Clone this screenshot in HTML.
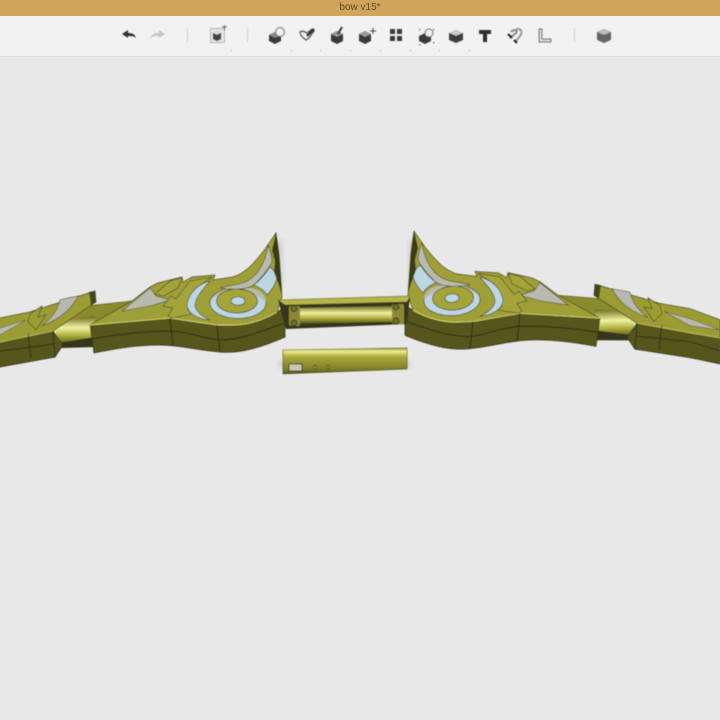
<!DOCTYPE html>
<html><head><meta charset="utf-8"><style>
html,body{margin:0;padding:0;width:720px;height:720px;overflow:hidden;background:#e8e8e8}
.t{position:absolute;left:0;top:0;width:720px;height:16px;background:#cfa55c;text-align:center;font:10px/15px "Liberation Sans",sans-serif;color:#5a4a2c}
.b{position:absolute;left:0;top:16px;width:720px;height:40px;background:#f2f2f2;border-bottom:1px solid #dedede}
svg{position:absolute;left:0;top:0}
</style></head><body>
<svg width="720" height="720" viewBox="0 0 720 720" style="top:0">
<defs>
<linearGradient id="tube" x1="0" y1="0" x2="0" y2="1"><stop offset="0" stop-color="#6a6a20"/><stop offset=".4" stop-color="#f2f2a0"/><stop offset=".7" stop-color="#a8a838"/><stop offset="1" stop-color="#4a4a18"/></linearGradient>
<linearGradient id="tube2" x1="0" y1="0" x2="0" y2="1"><stop offset="0" stop-color="#8a8a30"/><stop offset=".12" stop-color="#eeee90"/><stop offset=".35" stop-color="#a8a83a"/><stop offset=".8" stop-color="#7f7f2a"/><stop offset="1" stop-color="#52521c"/></linearGradient>
<filter id="bl" x="-5%" y="-5%" width="110%" height="110%"><feGaussianBlur stdDeviation="0.5"/></filter>
<filter id="sh" x="-30%" y="-30%" width="160%" height="160%"><feGaussianBlur stdDeviation="3"/></filter>
<g id="limb">
<!-- outer connector -->
<path d="M67 308L132 301L132 318L90 322L60 324Z" fill="#8a8a2e" stroke="#4a4a1a" stroke-width=".6"/>
<path d="M56 329L62 320L95 316L95 338L60 345L56 340Z" fill="url(#tube)"/>
<path d="M58 343L95 337L95 347L62 348Z" fill="#34341a"/>
<!-- outer section -->
<path d="M-30 332L0 342L53 331L63 345L55 357L0 367L-30 374Z" fill="#55551f" stroke="#2e2e14" stroke-width=".7"/>
<path d="M-30 330L0 318L30 312L95 291L96 302L53 331L0 342L-30 348Z" fill="#9c9c36" stroke="#3c3c18" stroke-width=".7"/>
<path d="M-30 348L0 342L53 331" fill="none" stroke="#d0d068" stroke-width=".8"/>
<path d="M60 300C70 297 74 297 78 296C72 308 62 318 42 326C52 318 58 310 60 300Z" fill="#b8b8ae" stroke="#4a4a20" stroke-width=".6"/>
<path d="M-30 340L0 328L26 320L0 335Z" fill="#b8b8ae" stroke="#4a4a20" stroke-width=".5"/>
<path d="M30 314L42 306L38 317L46 315L36 330L28 322Z" fill="#9c9c36" stroke="#3c3c18" stroke-width=".6"/>
<path d="M28 333L31 358M-30 361L0 351L54 344M53 331L55 357" fill="none" stroke="#24240e" stroke-width=".7"/>
<path d="M89 292L95 291L96 302L91 305Z" fill="#45451c"/>
<!-- main section side -->
<path d="M90 325L170 318L217 325L233 325L253 322L277 312L285 307L285 337C262 347 240 354 220 352C195 350 180 345 160 345C135 345 115 349 94 353Z" fill="#55551f" stroke="#2e2e14" stroke-width=".7"/>
<!-- main section top -->
<path d="M90 325L132 301L150 287L158 283L182 277L183 282L192 277L215 275L213 280L233 277C245 273 252 265 258 258C265 250 270 242 276 233L279 255L282 297L277 312C265 319 250 325 233 325L217 325L170 318Z" fill="#9f9f38" stroke="#3c3c18" stroke-width=".7"/>
<path d="M90 325L170 318L217 325L233 325C250 325 265 319 277 312" fill="none" stroke="#d6d670" stroke-width=".9"/>
<path d="M92 339C120 334 145 331 170 331C190 332 205 339 220 340C240 340 262 331 285 323M170 318L173 346M217 325L220 352" fill="none" stroke="#24240e" stroke-width=".8"/>
<!-- grey wedge -->
<path d="M122 311L150 288L156 296L170 300L150 306Z" fill="#b9b9ae" stroke="#3c3c18" stroke-width=".6"/>
<path d="M155 294L170 281L182 278L178 288L163 296Z" fill="#a4a43a" stroke="#3c3c18" stroke-width=".6"/>
<path d="M163 306L171 296L176 299L190 281L212 277L196 288L189 300L188 310L192 314L172 318L168 316L173 308Z" fill="#a4a43a" stroke="#3c3c18" stroke-width=".6"/>
<!-- crescent -->
<path d="M187 304C189 293 198 284 210 281C202 290 195 298 195 306C196 312 203 317 210 320C197 319 187 313 187 304Z" fill="#bcd6e2" stroke="#3c3c18" stroke-width=".6"/>
<!-- rings -->
<ellipse cx="238" cy="303" rx="28" ry="15.500" fill="#bcd6e2" stroke="#3c3c18" stroke-width=".7"/>
<path d="M212 298C220 288 238 285 254 289C262 291 266 296 266 302C258 294 244 289 228 290Z" fill="#b9b9ae"/>
<ellipse cx="237" cy="301" rx="20.500" ry="12" fill="#a4a43a" stroke="#3c3c18" stroke-width=".7"/>
<ellipse cx="238" cy="301" rx="7" ry="4.300" fill="#bcd6e2" stroke="#3c3c18" stroke-width=".7"/>
<!-- tip swoosh -->
<path d="M268 245C266 260 259 274 249 280C241 285 230 285 220 288C232 290 248 290 255 284C262 277 268 270 272 262C272 256 270 250 268 245Z" fill="#b9b9ae" stroke="#3c3c18" stroke-width=".6"/>
<path d="M270 267C264 276 258 282 254 285C261 288 265 291 267 295C272 290 276 283 278 275Z" fill="#bcd6e2" stroke="#3c3c18" stroke-width=".6"/>
<path d="M276 233L272 250L275 262L274 272L279 285L282 296L279 255Z" fill="#3a3a16"/>
</g>
</defs>
<rect width="720" height="720" fill="#e8e8e8"/>
<!-- soft shadows -->
<g filter="url(#sh)" fill="#000" opacity=".18"><rect x="277" y="240" width="4" height="50"/><rect x="410" y="240" width="4" height="50"/><rect x="280" y="362" width="130" height="5"/></g>
<g filter="url(#bl)">
<use href="#limb"/>
<use href="#limb" transform="matrix(-1 .027 0 1 690 -9.3)"/>
<!-- centre bar -->
<path d="M278 300L410 296L407 324L286 329Z" fill="#34341a"/>
<path d="M278 300L410 296L407 302L285 305Z" fill="#b5b54a" stroke="#4a4a1a" stroke-width=".5"/>
<path d="M300 308L392 306L392 322L300 324Z" fill="url(#tube)"/>
<rect x="289" y="306" width="11" height="20" rx="2" fill="#8a8a34"/><rect x="392" y="304" width="12" height="20" rx="2" fill="#8a8a34"/>
<circle cx="294" cy="308.500" r="3" fill="#6f6f2a" stroke="#202010" stroke-width=".8"/><circle cx="294" cy="323" r="3" fill="#6f6f2a" stroke="#202010" stroke-width=".8"/>
<circle cx="396" cy="307" r="3" fill="#6f6f2a" stroke="#202010" stroke-width=".8"/><circle cx="396" cy="321" r="3" fill="#6f6f2a" stroke="#202010" stroke-width=".8"/>
<!-- lower tube -->
<path d="M283 350L407 348L407 369L283 374Z" fill="url(#tube2)" stroke="#4a4a1a" stroke-width=".6"/>
<rect x="289" y="364" width="13" height="7" fill="#c8c8b8" stroke="#2a2a14" stroke-width=".8"/>
<circle cx="315" cy="367" r="2" fill="#86862e" stroke="#3c3c18" stroke-width=".5"/><circle cx="328" cy="367" r="2" fill="#86862e" stroke="#3c3c18" stroke-width=".5"/>
</g>
</svg>
<div class="t">bow v15*</div>
<div class="b"></div>
<svg width="720" height="60" viewBox="0 0 720 60" style="filter:blur(.5px)">
<!-- undo / redo -->
<path d="M122 34L128 30L128 33C132 33 135 34 136 38C134 36 131 36 128 36L128 38Z" fill="#333"/>
<path d="M165 34L159 30L159 33C155 33 152 34 150 38C153 36 156 36 159 36L159 38Z" fill="#c4c4c4"/>
<g stroke="#cfcfcf" stroke-width="1"><path d="M187.500 28V42M247.500 28V42M574.500 28V42"/></g>
<!-- new component -->
<rect x="210.500" y="28.500" width="14" height="14" fill="#e6e6e6" stroke="#b5b5b5"/>
<path d="M213 33L217 31L221 33V39L217 41L213 39Z" fill="#444"/><path d="M213 33L217 31L221 33L217 35Z" fill="#ddd"/>
<path d="M222 27H227M224.500 25V30" stroke="#666"/>
<!-- create -->
<path d="M269 35L275 32L281 35V41L275 44L269 41Z" fill="#3a3a3a"/><path d="M269 35L275 32L281 35L275 38Z" fill="#888"/>
<circle cx="280" cy="32" r="4.500" fill="#eee" stroke="#777"/>
<!-- sculpt -->
<path d="M300 32C302 30 305 32 307 33L312 29L314 31L309 38L306 40C303 38 300 35 300 32Z" fill="#eee" stroke="#555" stroke-width="1.200"/><path d="M307 36L314 29" stroke="#333" stroke-width="2.500"/>
<!-- fillet -->
<path d="M331 34L337 31L343 34V41L337 44L331 41Z" fill="#3a3a3a"/><path d="M331 34L337 31L343 34L337 37Z" fill="#999"/><path d="M338 34L342 27" stroke="#333" stroke-width="2"/>
<!-- move -->
<path d="M359 34L365 31L371 34V41L365 44L359 41Z" fill="#3a3a3a"/><path d="M359 34L365 31L371 34L365 37Z" fill="#999"/><path d="M370 31H376M373 28V34" stroke="#444"/>
<!-- pattern -->
<g fill="#3a3a3a"><rect x="390" y="29" width="5" height="5"/><rect x="397" y="29" width="5" height="5"/><rect x="390" y="36" width="5" height="5"/><rect x="397" y="36" width="5" height="5"/></g>
<!-- shell -->
<path d="M419 36L425 33L431 36V41L425 44L419 41Z" fill="#3a3a3a"/><circle cx="429" cy="33" r="4" fill="#eee" stroke="#777"/>
<g fill="#888"><rect x="419" y="29" width="1.500" height="1.500"/><rect x="433" y="29" width="1.500" height="1.500"/><rect x="433" y="42" width="1.500" height="1.500"/><rect x="419" y="44" width="1.500" height="1.500"/></g>
<!-- box -->
<path d="M449 33L456 30L463 33V40L456 43L449 40Z" fill="#3e3e3e"/><path d="M449 33L456 30L463 33L456 36Z" fill="#ccc"/>
<!-- T -->
<path d="M479 30H491V34H487V42H483V34H479Z" fill="#2e2e2e"/>
<!-- magnet -->
<path d="M510 38L516 33C519 30 513 29 511 32" fill="none" stroke="#888" stroke-width="2"/><path d="M516 41L520 36C523 32 521 28 516 29" fill="none" stroke="#999" stroke-width="2"/><path d="M508 34L512 38M514 40L517 43" stroke="#222" stroke-width="2"/>
<!-- L -->
<path d="M539 29H542V39H551V42H539Z" fill="#ddd" stroke="#777"/>
<!-- cube -->
<path d="M597 32L604 29L611 32V40L604 43L597 40Z" fill="#666"/><path d="M597 32L604 29L611 32L604 35Z" fill="#bbb"/>
<g fill="#aaa"><rect x="231" y="50" width="1" height="1"/><rect x="291" y="50" width="1" height="1"/><rect x="320" y="50" width="1" height="1"/><rect x="350" y="50" width="1" height="1"/><rect x="380" y="50" width="1" height="1"/><rect x="410" y="50" width="1" height="1"/><rect x="439" y="50" width="1" height="1"/><rect x="469" y="50" width="1" height="1"/></g>
</svg>
</body></html>
